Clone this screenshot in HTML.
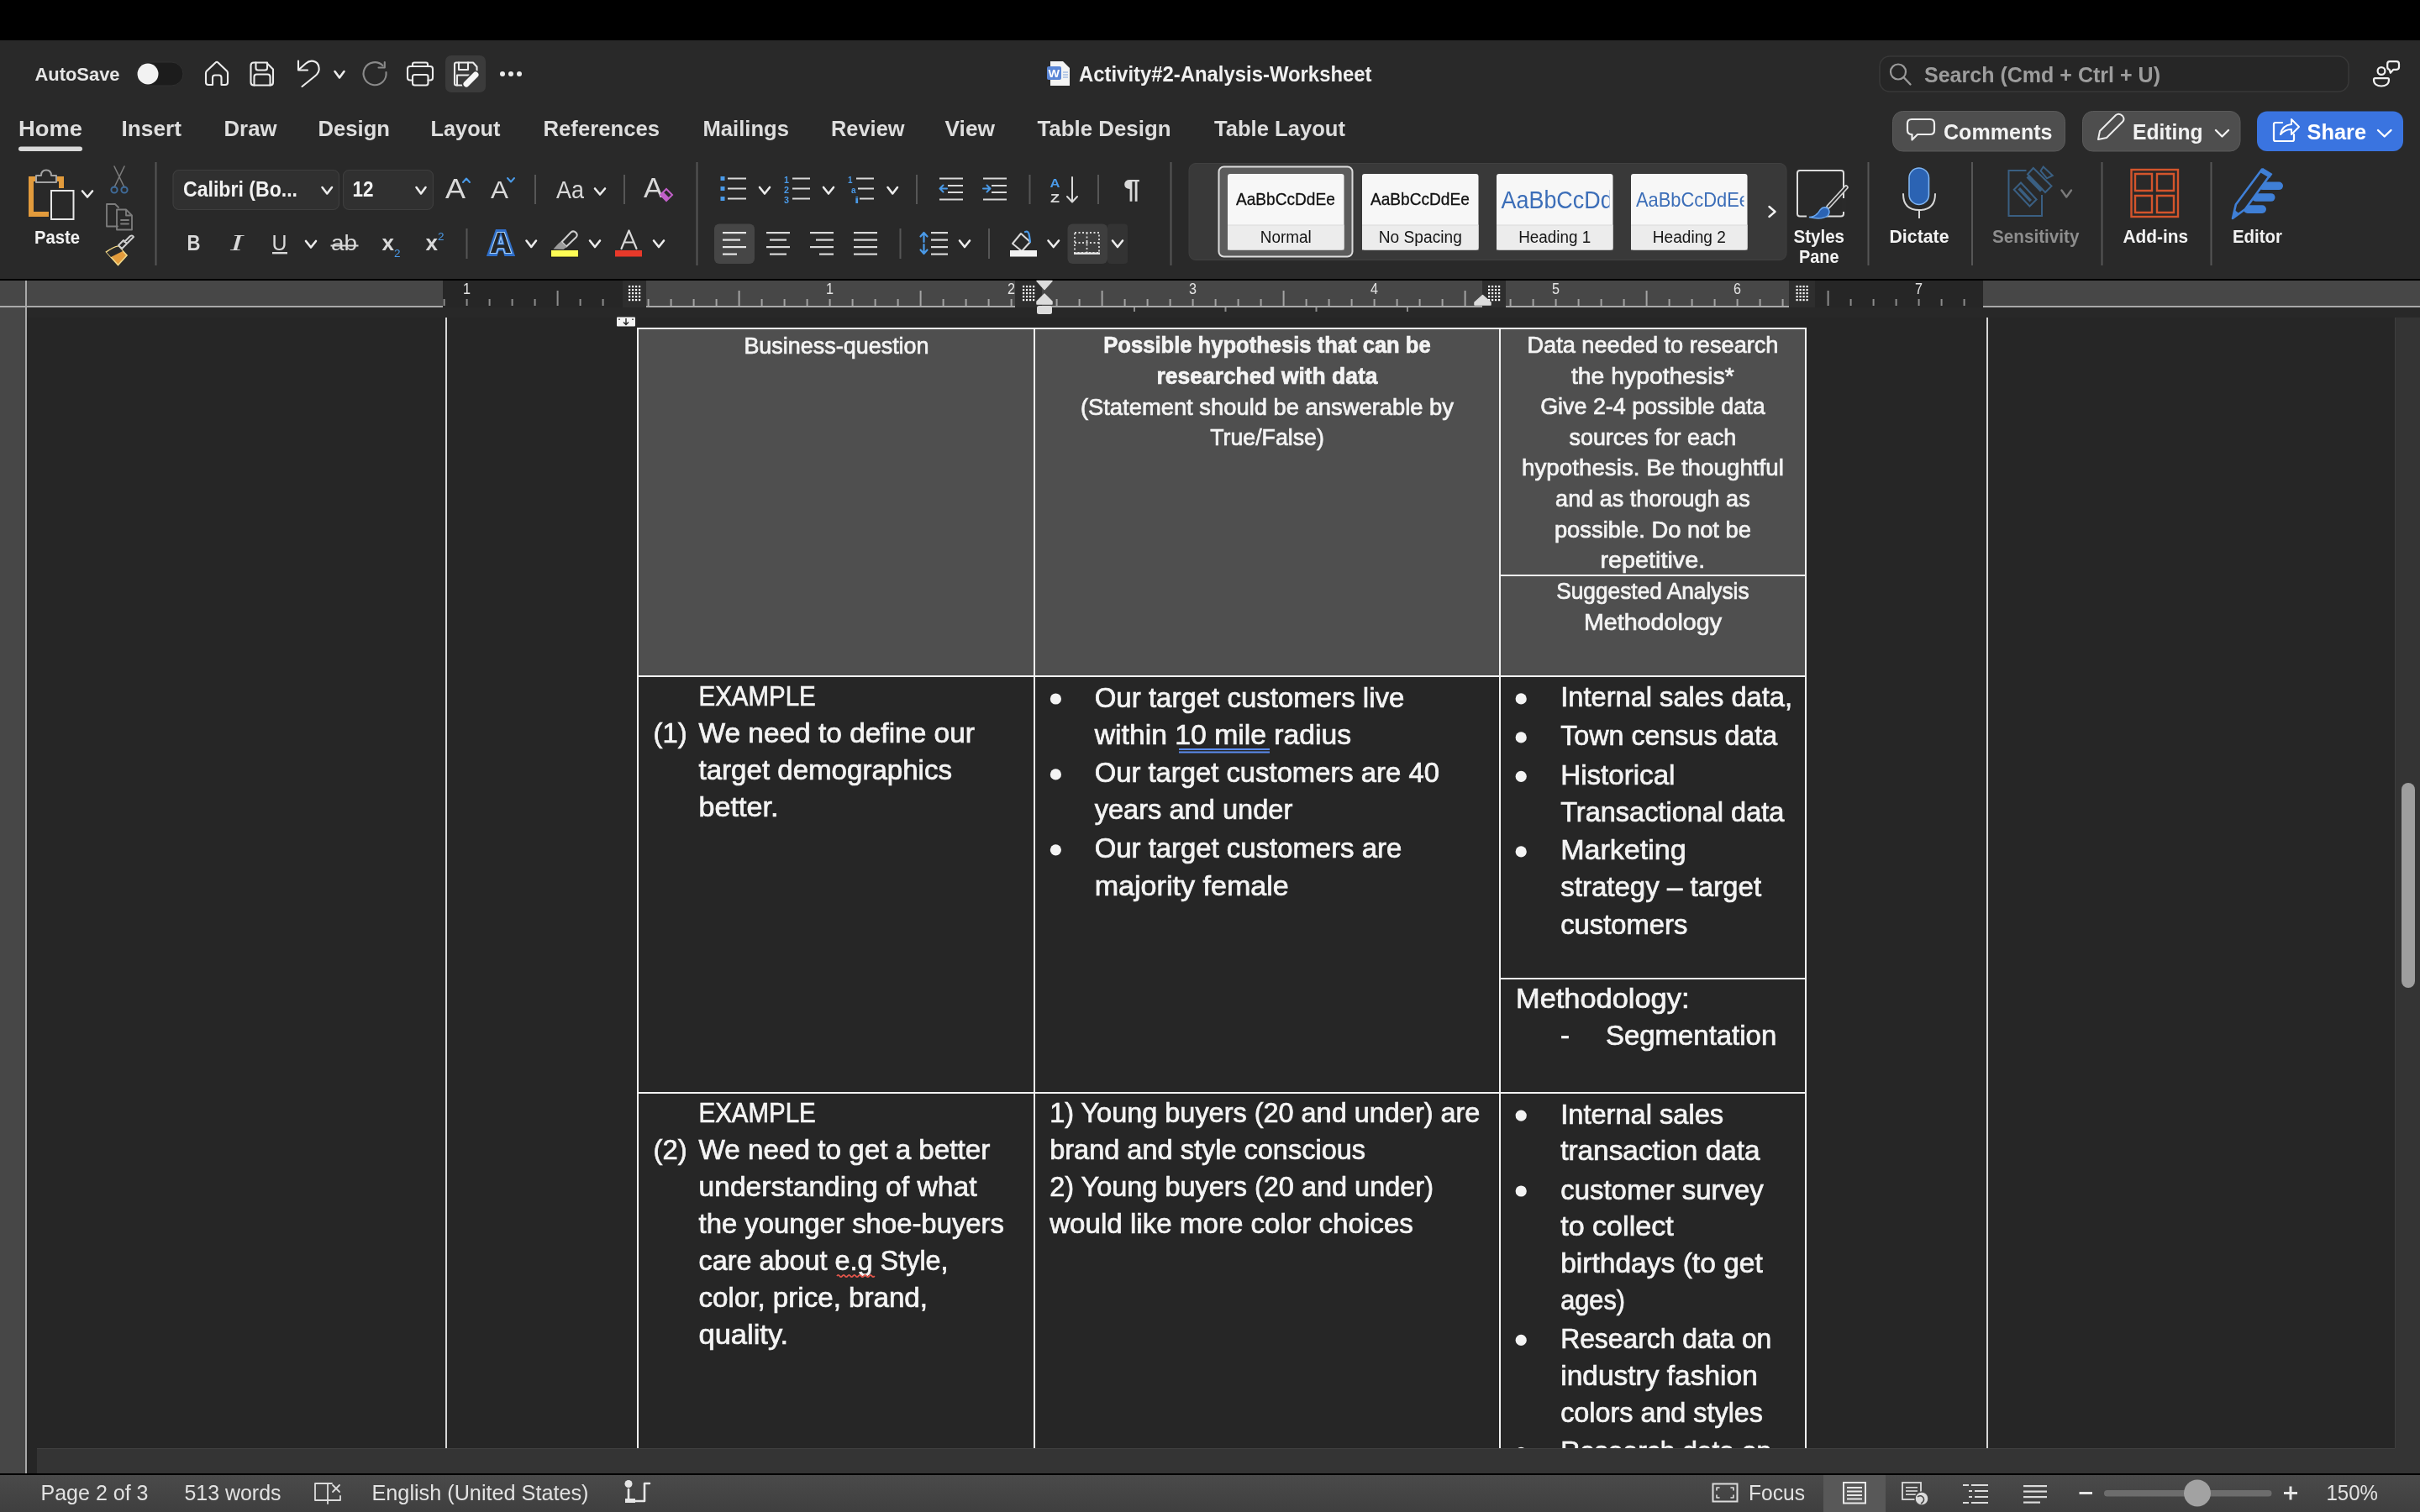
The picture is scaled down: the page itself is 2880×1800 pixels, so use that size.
<!DOCTYPE html>
<html><head><meta charset="utf-8"><title>Activity#2-Analysis-Worksheet</title>
<style>
html,body{margin:0;padding:0;background:#262626;width:2880px;height:1800px;overflow:hidden}
svg{display:block;font-family:"Liberation Sans",sans-serif;will-change:transform}
</style></head><body>
<svg width="2880" height="1800" viewBox="0 0 2880 1800">
<defs>
<linearGradient id="sb" x1="0" y1="0" x2="0" y2="1"><stop offset="0" stop-color="#4a4a4a"/><stop offset="1" stop-color="#3f3f3f"/></linearGradient>
</defs>
<rect x="0" y="0" width="2880" height="1800" fill="#262626"/>
<rect x="0" y="366" width="2880" height="12" fill="#282828"/>
<rect x="0" y="0" width="2880" height="48" fill="#000"/>
<rect x="0" y="48" width="2880" height="284" fill="#292929"/>
<rect x="0" y="332" width="2880" height="2" fill="#000"/>
<text x="41.5" y="96.0" font-size="22.5" fill="#e6e6e6" font-weight="bold" text-anchor="start" textLength="101.0" lengthAdjust="spacingAndGlyphs">AutoSave</text>
<rect x="162" y="74" width="56" height="28" rx="14" fill="#1c1c1c" stroke="#303030" stroke-width="1"/>
<circle cx="176" cy="88" r="12.5" fill="#f2f2f2"/>
<path d="M245,88 L245,98 Q245,101 248,101 L253,101 L253,92.5 Q253,89.5 256,89.5 L260.5,89.5 Q263.5,89.5 263.5,92.5 L263.5,101 L268,101 Q271,101 271,98 L271,87 Q271,85.5 270,84.5 L259.5,74.5 Q258,73 256.5,74.5 L246,84.5 Q245,85.5 245,87 Z" stroke="#ececec" stroke-width="2.1" fill="none" stroke-linecap="round" stroke-linejoin="round"/>
<path d="M302,74.5 L317,74.5 L325,82.5 L325,98 Q325,101.5 321.5,101.5 L302,101.5 Q298.5,101.5 298.5,98 L298.5,78 Q298.5,74.5 302,74.5 Z" stroke="#ececec" stroke-width="2.1" fill="none" stroke-linecap="round" stroke-linejoin="round"/>
<path d="M304.5,74.5 L304.5,81 Q304.5,83.5 307,83.5 L315.5,83.5 Q318,83.5 318,81 L318,74.5" stroke="#ececec" stroke-width="2.1" fill="none" stroke-linecap="round" stroke-linejoin="round"/>
<path d="M302.5,101.5 L302.5,91.5 Q302.5,88.5 305.5,88.5 L318.5,88.5 Q321.5,88.5 321.5,91.5 L321.5,101.5" stroke="#ececec" stroke-width="2.1" fill="none" stroke-linecap="round" stroke-linejoin="round"/>
<path d="M355,72.5 L355,83.5 L366,83.5" stroke="#ececec" stroke-width="2.1" fill="none" stroke-linecap="round" stroke-linejoin="round"/>
<path d="M355.5,83 L364,75.5 C369,71 378,71.5 379.5,80 C380.5,85 378,88 375,90.5 L359.5,103" stroke="#ececec" stroke-width="2.1" fill="none" stroke-linecap="round" stroke-linejoin="round"/>
<path d="M398.5,85 L404.0,92.5 L409.5,85" stroke="#ececec" stroke-width="2.6" fill="none" stroke-linecap="round" stroke-linejoin="round"/>
<path d="M459.5,86 A13.5,13.5 0 1 1 455.5,78" stroke="#8a8a8a" stroke-width="2.1" fill="none" stroke-linecap="round" stroke-linejoin="round"/>
<path d="M450.5,80.5 L457.8,80.5 L457.8,74" stroke="#8a8a8a" stroke-width="2.1" fill="none" stroke-linecap="round" stroke-linejoin="round"/>
<path d="M491,78 L491,76.5 Q491,74.5 493,74.5 L507,74.5 Q509,74.5 509,76.5 L509,78" stroke="#ececec" stroke-width="2.1" fill="none" stroke-linecap="round" stroke-linejoin="round"/>
<path d="M490.5,95.5 L488,95.5 Q485,95.5 485,92.5 L485,82 Q485,79 488,79 L512,79 Q515,79 515,82 L515,92.5 Q515,95.5 512,95.5 L509.5,95.5" stroke="#ececec" stroke-width="2.1" fill="none" stroke-linecap="round" stroke-linejoin="round"/>
<rect x="491" y="89" width="18.5" height="12.5" rx="2.5" fill="none" stroke="#ececec" stroke-width="2.1"/>
<rect x="530" y="66" width="48" height="44" rx="7" fill="#3b3b3b"/>
<path d="M550.5,101.5 L543,101.5 Q541,101.5 541,99.5 L541,76.5 Q541,74.5 543,74.5 L563,74.5 L567.5,79.5 L567.5,84" stroke="#ececec" stroke-width="2.1" fill="none" stroke-linecap="round" stroke-linejoin="round"/>
<path d="M546,74.5 L546,83 L557,83 L557,74.5" stroke="#ececec" stroke-width="2.1" fill="none" stroke-linecap="round" stroke-linejoin="round"/>
<path d="M544,101.5 L544,89.5 L558,89.5" stroke="#ececec" stroke-width="2.1" fill="none" stroke-linecap="round" stroke-linejoin="round"/>
<path d="M555,100 L566,89" stroke="#3b3b3b" stroke-width="10.5" fill="none" stroke-linecap="round" stroke-linejoin="round"/>
<path d="M555,100 L566,89" stroke="#f8f8f8" stroke-width="7" fill="none" stroke-linecap="round" stroke-linejoin="round"/>
<circle cx="598" cy="88" r="3" fill="#ececec"/>
<circle cx="608" cy="88" r="3" fill="#ececec"/>
<circle cx="618" cy="88" r="3" fill="#ececec"/>
<path d="M1250,73 L1265,73 L1273,81 L1273,102 L1250,102 Z" fill="#f4f4f4"/>
<rect x="1246" y="79" width="17" height="16" rx="2" fill="#5a86d6"/>
<text x="1247.5" y="92.0" font-size="12" fill="#fff" font-weight="bold" text-anchor="start" textLength="13.5" lengthAdjust="spacingAndGlyphs">W</text>
<path d="M1265,86 h6 M1265,89 h6 M1265,92 h6" stroke="#7f9fd8" stroke-width="1.2"/>
<text x="1284.0" y="97.3" font-size="26" fill="#f0f0f0" font-weight="bold" text-anchor="start" textLength="348.5" lengthAdjust="spacingAndGlyphs">Activity#2-Analysis-Worksheet</text>
<rect x="2237" y="67" width="558" height="42" rx="12" fill="#262626" stroke="#383838" stroke-width="1.5"/>
<circle cx="2259" cy="85.5" r="9" fill="none" stroke="#9a9a9a" stroke-width="2.2"/>
<path d="M2265.5,92 L2273.5,100.5" stroke="#9a9a9a" stroke-width="2.4" fill="none" stroke-linecap="round" stroke-linejoin="round"/>
<text x="2290.0" y="98.2" font-size="25.5" fill="#9d9d9d" font-weight="bold" text-anchor="start" textLength="281.0" lengthAdjust="spacingAndGlyphs">Search (Cmd + Ctrl + U)</text>
<circle cx="2834" cy="84.5" r="4.4" fill="none" stroke="#f2f2f2" stroke-width="2.2"/>
<path d="M2826.5,93.2 L2841.5,93.2 Q2843,93.2 2843,95 C2843,100 2839,102.5 2834,102.5 C2829,102.5 2825,100 2825,95 Q2825,93.2 2826.5,93.2 Z" stroke="#f2f2f2" stroke-width="2.2" fill="none" stroke-linecap="round" stroke-linejoin="round"/>
<path d="M2844,73.2 L2852,73.2 Q2855,73.2 2855,76.2 L2855,79.8 Q2855,82.8 2852,82.8 L2848.4,82.8 L2844.8,86.8 L2843.6,82.8 Q2841.2,82.5 2841.2,79.8 L2841.2,76.2 Q2841.2,73.2 2844,73.2 Z" stroke="#f2f2f2" stroke-width="2.2" fill="none" stroke-linecap="round" stroke-linejoin="round"/>
<text x="22.0" y="162.2" font-size="26.5" fill="#dedede" font-weight="bold" text-anchor="start" textLength="76.0" lengthAdjust="spacingAndGlyphs">Home</text>
<text x="144.5" y="162.2" font-size="26.5" fill="#dedede" font-weight="bold" text-anchor="start" textLength="71.5" lengthAdjust="spacingAndGlyphs">Insert</text>
<text x="266.5" y="162.2" font-size="26.5" fill="#dedede" font-weight="bold" text-anchor="start" textLength="63.0" lengthAdjust="spacingAndGlyphs">Draw</text>
<text x="378.5" y="162.2" font-size="26.5" fill="#dedede" font-weight="bold" text-anchor="start" textLength="85.5" lengthAdjust="spacingAndGlyphs">Design</text>
<text x="512.5" y="162.2" font-size="26.5" fill="#dedede" font-weight="bold" text-anchor="start" textLength="83.0" lengthAdjust="spacingAndGlyphs">Layout</text>
<text x="646.5" y="162.2" font-size="26.5" fill="#dedede" font-weight="bold" text-anchor="start" textLength="138.5" lengthAdjust="spacingAndGlyphs">References</text>
<text x="836.5" y="162.2" font-size="26.5" fill="#dedede" font-weight="bold" text-anchor="start" textLength="102.5" lengthAdjust="spacingAndGlyphs">Mailings</text>
<text x="989.0" y="162.2" font-size="26.5" fill="#dedede" font-weight="bold" text-anchor="start" textLength="87.5" lengthAdjust="spacingAndGlyphs">Review</text>
<text x="1124.5" y="162.2" font-size="26.5" fill="#dedede" font-weight="bold" text-anchor="start" textLength="59.5" lengthAdjust="spacingAndGlyphs">View</text>
<text x="1234.5" y="162.2" font-size="26.5" fill="#dedede" font-weight="bold" text-anchor="start" textLength="159.0" lengthAdjust="spacingAndGlyphs">Table Design</text>
<text x="1445.0" y="162.2" font-size="26.5" fill="#dedede" font-weight="bold" text-anchor="start" textLength="156.0" lengthAdjust="spacingAndGlyphs">Table Layout</text>
<rect x="22" y="174.5" width="76" height="5.5" rx="2.75" fill="#d9d9d9"/>
<rect x="2252.5" y="132.5" width="205" height="47.5" rx="12" fill="#4e4e4e" stroke="#5a5a5a" stroke-width="1"/>
<path d="M2275,142 L2297,142 Q2302,142 2302,147 L2302,155 Q2302,160 2297,160 L2282,160 L2275.5,166.5 L2275.5,160 Q2270,160 2270,155 L2270,147 Q2270,142 2275,142 Z" stroke="#ececec" stroke-width="2.2" fill="none" stroke-linecap="round" stroke-linejoin="round"/>
<text x="2313.0" y="165.7" font-size="26" fill="#f2f2f2" font-weight="bold" text-anchor="start" textLength="129.5" lengthAdjust="spacingAndGlyphs">Comments</text>
<rect x="2478.5" y="132.5" width="187.5" height="47.5" rx="12" fill="#4e4e4e" stroke="#5a5a5a" stroke-width="1"/>
<path d="M2497,166 L2499,156 L2518,137 Q2522,134 2526,138 Q2529,142 2526,145 L2507,164 Z" stroke="#ececec" stroke-width="2" fill="none" stroke-linecap="round" stroke-linejoin="round"/>
<text x="2538.0" y="165.7" font-size="26" fill="#f2f2f2" font-weight="bold" text-anchor="start" textLength="83.5" lengthAdjust="spacingAndGlyphs">Editing</text>
<path d="M2637,155 L2644.5,162.5 L2652,155" stroke="#f2f2f2" stroke-width="2.4" fill="none" stroke-linecap="round" stroke-linejoin="round"/>
<rect x="2686" y="132.5" width="174" height="47.5" rx="12" fill="#3a74e0"/>
<path d="M2716,146 L2708,146 Q2706,146 2706,148 L2706,166 Q2706,168 2708,168 L2728,168 Q2730,168 2730,166 L2730,160" stroke="#fff" stroke-width="2.2" fill="none" stroke-linecap="round" stroke-linejoin="round"/>
<path d="M2714,160 Q2716,149 2727,148 L2727,142 L2736,151 L2727,160 L2727,154 Q2719,154 2714,160 Z" stroke="#fff" stroke-width="2" fill="none" stroke-linecap="round" stroke-linejoin="round"/>
<text x="2745.5" y="165.7" font-size="26" fill="#fff" font-weight="bold" text-anchor="start" textLength="70.5" lengthAdjust="spacingAndGlyphs">Share</text>
<path d="M2830,155 L2837.75,162.5 L2845.5,155" stroke="#fff" stroke-width="2.4" fill="none" stroke-linecap="round" stroke-linejoin="round"/>
<rect x="184.5" y="193" width="2" height="123" fill="#565656"/>
<rect x="828.5" y="193" width="2" height="123" fill="#565656"/>
<rect x="1392.5" y="193" width="2" height="123" fill="#565656"/>
<rect x="2222.5" y="193" width="2" height="123" fill="#565656"/>
<rect x="2346" y="193" width="2" height="123" fill="#565656"/>
<rect x="2500.5" y="193" width="2" height="123" fill="#565656"/>
<rect x="2630.5" y="193" width="2" height="123" fill="#565656"/>
<rect x="636" y="208" width="2" height="35" fill="#565656"/>
<rect x="742" y="208" width="2" height="35" fill="#565656"/>
<rect x="1090" y="208" width="2" height="35" fill="#565656"/>
<rect x="1224.5" y="208" width="2" height="35" fill="#565656"/>
<rect x="1306" y="208" width="2" height="35" fill="#565656"/>
<rect x="554.5" y="272" width="2" height="36" fill="#565656"/>
<rect x="1070.5" y="272" width="2" height="36" fill="#565656"/>
<rect x="1176" y="272" width="2" height="36" fill="#565656"/>
<path d="M34,210 L76,210 L76,224 L70,224 L70,216 L40,216 L40,252 L58,252 L58,258 L34,258 Z" fill="#e29b3c"/>
<path d="M43,217 L43,209 L49,209 Q49,202.5 55,202.5 Q61,202.5 61,209 L67,209 L67,217 Z" stroke="#a3a3a3" stroke-width="2" fill="#2a2a2a" stroke-linecap="round" stroke-linejoin="round"/>
<rect x="61" y="227" width="26.5" height="34" fill="none" stroke="#e6e6e6" stroke-width="2"/>
<path d="M98,227.5 L104.0,234.5 L110,227.5" stroke="#ececec" stroke-width="2.6" fill="none" stroke-linecap="round" stroke-linejoin="round"/>
<text x="41.0" y="289.7" font-size="21.5" fill="#f2f2f2" font-weight="bold" text-anchor="start" textLength="54.0" lengthAdjust="spacingAndGlyphs">Paste</text>
<path d="M136,198 L148,223 M148,198 L136,223" stroke="#7b7b7b" stroke-width="1.6" fill="none" stroke-linecap="round" stroke-linejoin="round"/>
<circle cx="136" cy="226" r="3.6" fill="none" stroke="#3f6b99" stroke-width="2"/><circle cx="148" cy="226" r="3.6" fill="none" stroke="#3f6b99" stroke-width="2"/>
<path d="M140,269.5 L127,269.5 L127,243 L137,243 L141,247" stroke="#7d7d7d" stroke-width="1.8" fill="none" stroke-linecap="round" stroke-linejoin="round" stroke-linecap="butt" stroke-linejoin="miter"/>
<path d="M139,249.5 L150,249.5 L157,256.5 L157,273.5 L139,273.5 Z M150,249.5 L150,256.5 L157,256.5 M144,262 L153,262 M144,266.5 L153,266.5" stroke="#7d7d7d" stroke-width="1.8" fill="none" stroke-linecap="round" stroke-linejoin="round" stroke-linecap="butt" stroke-linejoin="miter"/>
<path d="M126.5,300 Q135,294 141,293 L151,304 L140.5,315.5 Z" fill="#e29b3c" stroke="#f1d888" stroke-width="1.6"/>
<path d="M127,300.5 Q135,294.5 141,293.5 L146,299 L132,306 Z" fill="#2a2a2a"/>
<path d="M141,292 L147,286 L151,290 L145,296 Z M148,288 L155,281 Q157.5,279.5 159,282 L152,289" stroke="#cfcfcf" stroke-width="2" fill="none" stroke-linecap="round" stroke-linejoin="round"/>
<rect x="206" y="202.5" width="197.5" height="47" rx="7" fill="#303030" stroke="#3e3e3e" stroke-width="1.2"/>
<text x="218.0" y="234.0" font-size="25" fill="#f2f2f2" font-weight="bold" text-anchor="start" textLength="136.0" lengthAdjust="spacingAndGlyphs">Calibri (Bo...</text>
<path d="M383.5,223 L389.25,230.5 L395,223" stroke="#ececec" stroke-width="2.6" fill="none" stroke-linecap="round" stroke-linejoin="round"/>
<rect x="408.5" y="202.5" width="107" height="47" rx="7" fill="#303030" stroke="#3e3e3e" stroke-width="1.2"/>
<text x="419.5" y="234.0" font-size="25" fill="#f2f2f2" font-weight="bold" text-anchor="start" textLength="25.0" lengthAdjust="spacingAndGlyphs">12</text>
<path d="M495.5,223 L501.0,230.5 L506.5,223" stroke="#ececec" stroke-width="2.6" fill="none" stroke-linecap="round" stroke-linejoin="round"/>
<text x="530.0" y="235.5" font-size="34" fill="#d9d9d9" font-weight="normal" text-anchor="start" textLength="24.0" lengthAdjust="spacingAndGlyphs">A</text>
<path d="M551,217 L555,212.5 L559,217" stroke="#4a9ae8" stroke-width="2" fill="none" stroke-linecap="round" stroke-linejoin="round"/>
<text x="584.0" y="235.5" font-size="30" fill="#d9d9d9" font-weight="normal" text-anchor="start" textLength="21.0" lengthAdjust="spacingAndGlyphs">A</text>
<path d="M604,212 L608,216.5 L612,212" stroke="#4a9ae8" stroke-width="2" fill="none" stroke-linecap="round" stroke-linejoin="round"/>
<text x="662.0" y="235.5" font-size="29" fill="#d9d9d9" font-weight="normal" text-anchor="start" textLength="33.0" lengthAdjust="spacingAndGlyphs">Aa</text>
<path d="M708,224.5 L714.0,231.5 L720,224.5" stroke="#ececec" stroke-width="2.6" fill="none" stroke-linecap="round" stroke-linejoin="round"/>
<text x="766.0" y="235.0" font-size="34" fill="#d9d9d9" font-weight="normal" text-anchor="start" textLength="23.0" lengthAdjust="spacingAndGlyphs">A</text>
<path d="M786,232 L793,225 L800,232 L793,239 Z" fill="none" stroke="#c060c8" stroke-width="2"/>
<path d="M786,232 L789.5,228.5 L796.5,235.5 L793,239 Z" fill="#c060c8"/>
<text x="222.5" y="298.0" font-size="26.5" fill="#d9d9d9" font-weight="bold" text-anchor="start" textLength="16.0" lengthAdjust="spacingAndGlyphs">B</text>
<text x="274" y="298" font-size="27" fill="#d9d9d9" font-family="Liberation Serif" font-style="italic" textLength="15" lengthAdjust="spacingAndGlyphs">I</text>
<text x="323.5" y="298.0" font-size="26" fill="#d9d9d9" font-weight="normal" text-anchor="start" textLength="18.0" lengthAdjust="spacingAndGlyphs">U</text>
<rect x="324" y="300" width="18" height="2.4" fill="#d9d9d9"/>
<path d="M364,287 L370.0,294.5 L376,287" stroke="#ececec" stroke-width="2.6" fill="none" stroke-linecap="round" stroke-linejoin="round"/>
<text x="394.0" y="298.0" font-size="25" fill="#d9d9d9" font-weight="normal" text-anchor="start" textLength="31.0" lengthAdjust="spacingAndGlyphs">ab</text>
<rect x="393.5" y="291.5" width="33" height="2" fill="#d9d9d9"/>
<text x="454.5" y="298.0" font-size="26" fill="#d9d9d9" font-weight="bold" text-anchor="start" textLength="14.5" lengthAdjust="spacingAndGlyphs">x</text>
<text x="469.0" y="305.5" font-size="13" fill="#4a9ae8" font-weight="normal" text-anchor="start" textLength="7.5" lengthAdjust="spacingAndGlyphs">2</text>
<text x="506.5" y="298.0" font-size="26" fill="#d9d9d9" font-weight="bold" text-anchor="start" textLength="14.5" lengthAdjust="spacingAndGlyphs">x</text>
<text x="521.0" y="286.0" font-size="13" fill="#4a9ae8" font-weight="normal" text-anchor="start" textLength="7.5" lengthAdjust="spacingAndGlyphs">2</text>
<path d="M591,274.5 L601,274.5 L611,303.5 L601.5,303.5 L599.5,297 L592.5,297 L590.5,303.5 L581,303.5 Z M593.5,290 L598.5,290 L596,281 Z" fill="#252525" fill-rule="evenodd" stroke="#2f6ec8" stroke-width="3" stroke-linejoin="miter"/>
<path d="M591,274.5 L601,274.5 L611,303.5 L601.5,303.5 L599.5,297 L592.5,297 L590.5,303.5 L581,303.5 Z M593.5,290 L598.5,290 L596,281 Z" fill="none" stroke="#a6d0f7" stroke-width="1.3" transform="translate(596,289) scale(0.86) translate(-596,-289)"/>
<path d="M626.5,286.5 L632.25,294 L638,286.5" stroke="#ececec" stroke-width="2.6" fill="none" stroke-linecap="round" stroke-linejoin="round"/>
<path d="M668.5,288 L679.5,276.5 Q682.5,274 685.5,277 Q688,280 685.5,282.5 L674,293.5 Z" stroke="#cfcfcf" stroke-width="2" fill="none" stroke-linecap="round" stroke-linejoin="round"/>
<path d="M667.5,287.5 L674.5,294 L670.5,297 L658.5,296.5 L664.5,290 Z" fill="#9a9a9a"/>
<rect x="655.5" y="297.5" width="33" height="8.5" fill="#fdfc55" stroke="#111" stroke-width="0.8"/>
<path d="M702,286.5 L708.0,294 L714,286.5" stroke="#ececec" stroke-width="2.6" fill="none" stroke-linecap="round" stroke-linejoin="round"/>
<path d="M739.5,296 L748.5,274.5 L757.5,296 M742.5,288.5 L754.5,288.5" stroke="#d9d9d9" stroke-width="2.2" fill="none" stroke-linecap="round" stroke-linejoin="round" stroke-linecap="butt" stroke-linejoin="miter"/>
<rect x="732" y="298" width="32" height="7.5" fill="#e8392a"/>
<path d="M778,286.5 L784.0,294 L790,286.5" stroke="#ececec" stroke-width="2.6" fill="none" stroke-linecap="round" stroke-linejoin="round"/>
<rect x="857.5" y="210" width="5" height="5" fill="#4a9ae8"/>
<rect x="866" y="211.5" width="22" height="2" fill="#d9d9d9"/>
<rect x="857.5" y="222" width="5" height="5" fill="#4a9ae8"/>
<rect x="866" y="223.5" width="22" height="2" fill="#d9d9d9"/>
<rect x="857.5" y="234" width="5" height="5" fill="#4a9ae8"/>
<rect x="866" y="235.5" width="22" height="2" fill="#d9d9d9"/>
<path d="M904,223 L910.0,230.5 L916,223" stroke="#ececec" stroke-width="2.6" fill="none" stroke-linecap="round" stroke-linejoin="round"/>
<text x="933.0" y="217.5" font-size="10.5" fill="#4a9ae8" font-weight="bold" text-anchor="start" textLength="6.0" lengthAdjust="spacingAndGlyphs">1</text>
<rect x="943" y="211.5" width="21" height="2" fill="#d9d9d9"/>
<text x="933.0" y="229.5" font-size="10.5" fill="#4a9ae8" font-weight="bold" text-anchor="start" textLength="6.0" lengthAdjust="spacingAndGlyphs">2</text>
<rect x="943" y="223.5" width="21" height="2" fill="#d9d9d9"/>
<text x="933.0" y="241.5" font-size="10.5" fill="#4a9ae8" font-weight="bold" text-anchor="start" textLength="6.0" lengthAdjust="spacingAndGlyphs">3</text>
<rect x="943" y="235.5" width="21" height="2" fill="#d9d9d9"/>
<path d="M980,223 L986.0,230.5 L992,223" stroke="#ececec" stroke-width="2.6" fill="none" stroke-linecap="round" stroke-linejoin="round"/>
<text x="1009.0" y="217.5" font-size="10.5" fill="#4a9ae8" font-weight="bold" text-anchor="start" textLength="5.5" lengthAdjust="spacingAndGlyphs">1</text>
<rect x="1019" y="211.5" width="21" height="2" fill="#d9d9d9"/>
<text x="1013.0" y="229.5" font-size="10.5" fill="#4a9ae8" font-weight="bold" text-anchor="start" textLength="5.5" lengthAdjust="spacingAndGlyphs">a</text>
<rect x="1021" y="223.5" width="19" height="2" fill="#d9d9d9"/>
<text x="1017.0" y="241.5" font-size="10.5" fill="#4a9ae8" font-weight="bold" text-anchor="start" textLength="5.5" lengthAdjust="spacingAndGlyphs">i</text>
<rect x="1023" y="235.5" width="17" height="2" fill="#d9d9d9"/>
<path d="M1056.5,223 L1062.25,230.5 L1068,223" stroke="#ececec" stroke-width="2.6" fill="none" stroke-linecap="round" stroke-linejoin="round"/>
<rect x="1118" y="211.5" width="28" height="2" fill="#d9d9d9"/>
<rect x="1128" y="220" width="18" height="2" fill="#d9d9d9"/>
<rect x="1128" y="228" width="18" height="2" fill="#d9d9d9"/>
<rect x="1118" y="236.5" width="28" height="2" fill="#d9d9d9"/>
<rect x="1170" y="211.5" width="28" height="2" fill="#d9d9d9"/>
<rect x="1180" y="220" width="18" height="2" fill="#d9d9d9"/>
<rect x="1180" y="228" width="18" height="2" fill="#d9d9d9"/>
<rect x="1170" y="236.5" width="28" height="2" fill="#d9d9d9"/>
<path d="M1127,224.5 L1119,224.5 M1122.5,220.5 L1118.5,224.5 L1122.5,228.5" stroke="#4a9ae8" stroke-width="2" fill="none" stroke-linecap="round" stroke-linejoin="round"/>
<path d="M1170,224.5 L1178,224.5 M1174.5,220.5 L1178.5,224.5 L1174.5,228.5" stroke="#4a9ae8" stroke-width="2" fill="none" stroke-linecap="round" stroke-linejoin="round"/>
<text x="1249.5" y="222.5" font-size="14" fill="#4a9ae8" font-weight="bold" text-anchor="start" textLength="12.0" lengthAdjust="spacingAndGlyphs">A</text>
<text x="1250.0" y="240.5" font-size="14" fill="#d9d9d9" font-weight="bold" text-anchor="start" textLength="11.0" lengthAdjust="spacingAndGlyphs">Z</text>
<path d="M1276,211 L1276,240 M1270,234 L1276,240.5 L1282,234" stroke="#d9d9d9" stroke-width="2" fill="none" stroke-linecap="round" stroke-linejoin="round"/>
<text x="1337.0" y="236.0" font-size="31" fill="#d9d9d9" font-weight="bold" text-anchor="start" textLength="20.0" lengthAdjust="spacingAndGlyphs">¶</text>
<rect x="850" y="266.5" width="48" height="47.5" rx="6" fill="#464646"/>
<rect x="860" y="276.0" width="28" height="2.2" fill="#e6e6e6"/>
<rect x="860" y="284.5" width="21" height="2.2" fill="#e6e6e6"/>
<rect x="860" y="293.0" width="28" height="2.2" fill="#e6e6e6"/>
<rect x="860" y="301.5" width="17" height="2.2" fill="#e6e6e6"/>
<rect x="912" y="276.0" width="28" height="2.2" fill="#d9d9d9"/>
<rect x="916" y="284.5" width="20" height="2.2" fill="#d9d9d9"/>
<rect x="912" y="293.0" width="28" height="2.2" fill="#d9d9d9"/>
<rect x="916" y="301.5" width="20" height="2.2" fill="#d9d9d9"/>
<rect x="964" y="276.0" width="28" height="2.2" fill="#d9d9d9"/>
<rect x="971" y="284.5" width="21" height="2.2" fill="#d9d9d9"/>
<rect x="964" y="293.0" width="28" height="2.2" fill="#d9d9d9"/>
<rect x="975" y="301.5" width="17" height="2.2" fill="#d9d9d9"/>
<rect x="1016" y="276.0" width="28" height="2.2" fill="#d9d9d9"/>
<rect x="1016" y="284.5" width="28" height="2.2" fill="#d9d9d9"/>
<rect x="1016" y="293.0" width="28" height="2.2" fill="#d9d9d9"/>
<rect x="1016" y="301.5" width="28" height="2.2" fill="#d9d9d9"/>
<rect x="1108" y="276.0" width="20" height="2.2" fill="#d9d9d9"/>
<rect x="1108" y="284.5" width="20" height="2.2" fill="#d9d9d9"/>
<rect x="1108" y="293.0" width="20" height="2.2" fill="#d9d9d9"/>
<rect x="1108" y="301.5" width="20" height="2.2" fill="#d9d9d9"/>
<path d="M1099.5,277.5 L1099.5,288 M1095.5,281.5 L1099.5,277 L1103.5,281.5 M1099.5,291 L1099.5,301.5 M1095.5,297.5 L1099.5,302 L1103.5,297.5" stroke="#4a9ae8" stroke-width="2.2" fill="none" stroke-linecap="round" stroke-linejoin="round"/>
<path d="M1142,286.5 L1148.0,294 L1154,286.5" stroke="#ececec" stroke-width="2.6" fill="none" stroke-linecap="round" stroke-linejoin="round"/>
<path d="M1205,290 L1215,278 L1226,288 L1216,299 Z" stroke="#d9d9d9" stroke-width="2" fill="none" stroke-linecap="round" stroke-linejoin="round"/>
<path d="M1220,276 Q1224,274 1225,281 L1226,288" stroke="#4a9ae8" stroke-width="2.2" fill="none" stroke-linecap="round" stroke-linejoin="round"/>
<rect x="1202" y="298" width="32" height="7.5" fill="#f2f2f2"/>
<path d="M1247.5,286.5 L1253.75,294 L1260,286.5" stroke="#ececec" stroke-width="2.6" fill="none" stroke-linecap="round" stroke-linejoin="round"/>
<rect x="1270.5" y="266.5" width="47.5" height="47.5" rx="6" fill="#3e3e3e"/>
<rect x="1318" y="266.5" width="24" height="47.5" rx="4" fill="#333"/>
<path d="M1279,277 h29 v24 h-29 z M1293.5,277 v24 M1279,289 h29" stroke="#d9d9d9" stroke-width="1.8" stroke-dasharray="2,2.5" fill="none"/>
<rect x="1278" y="300.5" width="31" height="2.4" fill="#e6e6e6"/>
<path d="M1324,286.5 L1330.0,294 L1336,286.5" stroke="#ececec" stroke-width="2.6" fill="none" stroke-linecap="round" stroke-linejoin="round"/>
<rect x="1415" y="194.5" width="711" height="115" rx="8" fill="#393939" stroke="#414141" stroke-width="1"/>
<rect x="1450.5" y="198.5" width="159" height="107" rx="6" fill="#5c5c5c" stroke="#dcdcdc" stroke-width="2"/>
<rect x="1461" y="207" width="138.5" height="90.5" rx="3" fill="#f7f7f7"/>
<rect x="1461" y="268" width="138.5" height="29.5" fill="#ececec"/>
<rect x="1461" y="267.5" width="138.5" height="1" fill="#dadada"/>
<clipPath id="cp1461"><rect x="1461" y="207" width="134.5" height="60"/></clipPath><g clip-path="url(#cp1461)">
<text x="1471.0" y="244.2" font-size="20.4" fill="#111" font-weight="normal" text-anchor="start" textLength="117.8" lengthAdjust="spacingAndGlyphs" stroke="#111" stroke-width="0.3">AaBbCcDdEe</text>
</g>
<text x="1499.8" y="288.5" font-size="20" fill="#141414" font-weight="normal" text-anchor="start" textLength="61.0" lengthAdjust="spacingAndGlyphs">Normal</text>
<rect x="1621" y="207" width="138.5" height="90.5" rx="3" fill="#f7f7f7"/>
<rect x="1621" y="268" width="138.5" height="29.5" fill="#ececec"/>
<rect x="1621" y="267.5" width="138.5" height="1" fill="#dadada"/>
<clipPath id="cp1621"><rect x="1621" y="207" width="134.5" height="60"/></clipPath><g clip-path="url(#cp1621)">
<text x="1631.0" y="244.2" font-size="20.4" fill="#111" font-weight="normal" text-anchor="start" textLength="117.8" lengthAdjust="spacingAndGlyphs" stroke="#111" stroke-width="0.3">AaBbCcDdEe</text>
</g>
<text x="1640.8" y="288.5" font-size="20" fill="#141414" font-weight="normal" text-anchor="start" textLength="99.0" lengthAdjust="spacingAndGlyphs">No Spacing</text>
<rect x="1781" y="207" width="138.5" height="90.5" rx="3" fill="#f7f7f7"/>
<rect x="1781" y="268" width="138.5" height="29.5" fill="#ececec"/>
<rect x="1781" y="267.5" width="138.5" height="1" fill="#dadada"/>
<clipPath id="cp1781"><rect x="1781" y="207" width="134.5" height="60"/></clipPath><g clip-path="url(#cp1781)">
<text x="1786.5" y="247.9" font-size="28.8" fill="#3c6eb8" font-weight="normal" text-anchor="start" textLength="166.1" lengthAdjust="spacingAndGlyphs" stroke="#3c6eb8" stroke-width="0">AaBbCcDdEe</text>
</g>
<text x="1807.2" y="288.5" font-size="20" fill="#141414" font-weight="normal" text-anchor="start" textLength="86.0" lengthAdjust="spacingAndGlyphs">Heading 1</text>
<rect x="1941" y="207" width="138.5" height="90.5" rx="3" fill="#f7f7f7"/>
<rect x="1941" y="268" width="138.5" height="29.5" fill="#ececec"/>
<rect x="1941" y="267.5" width="138.5" height="1" fill="#dadada"/>
<clipPath id="cp1941"><rect x="1941" y="207" width="134.5" height="60"/></clipPath><g clip-path="url(#cp1941)">
<text x="1947.0" y="246.0" font-size="23.4" fill="#3c6eb8" font-weight="normal" text-anchor="start" textLength="135.0" lengthAdjust="spacingAndGlyphs" stroke="#3c6eb8" stroke-width="0">AaBbCcDdEe</text>
</g>
<text x="1966.8" y="288.5" font-size="20" fill="#141414" font-weight="normal" text-anchor="start" textLength="87.0" lengthAdjust="spacingAndGlyphs">Heading 2</text>
<path d="M2105.5,246 L2112.5,252 L2105.5,258" stroke="#f2f2f2" stroke-width="2.4" fill="none" stroke-linecap="round" stroke-linejoin="round"/>
<rect x="2139" y="203" width="55" height="54.5" rx="3" fill="none" stroke="#dcdcdc" stroke-width="2"/>
<rect x="2150" y="250" width="14" height="10" fill="#2a2a2a"/>
<rect x="2192" y="236" width="5" height="16" fill="#2a2a2a"/>
<path d="M2197,223 L2176,246" stroke="#d0d0d0" stroke-width="5.5" fill="none" stroke-linecap="round" stroke-linejoin="round"/>
<path d="M2197,223 L2176,246" stroke="#2a2a2a" stroke-width="2" fill="none" stroke-linecap="round" stroke-linejoin="round"/>
<path d="M2153,258.5 Q2162,258 2166,250 Q2170,245 2175,248 Q2179,252 2175,257 Q2168,262 2153,258.5 Z" fill="#2b63b3" stroke="#69a6ee" stroke-width="1.5"/>
<text x="2134.5" y="289.3" font-size="21.5" fill="#f2f2f2" font-weight="bold" text-anchor="start" textLength="60.5" lengthAdjust="spacingAndGlyphs">Styles</text>
<text x="2141.0" y="313.0" font-size="21.5" fill="#f2f2f2" font-weight="bold" text-anchor="start" textLength="47.5" lengthAdjust="spacingAndGlyphs">Pane</text>
<rect x="2272" y="200" width="23.5" height="43.5" rx="11.75" fill="#2b63b3" stroke="#7fb4f0" stroke-width="1.6"/>
<path d="M2265,231 Q2265,250 2284,250 Q2303,250 2303,231" stroke="#d6d6d6" stroke-width="2" fill="none" stroke-linecap="round" stroke-linejoin="round"/>
<rect x="2283" y="250" width="2" height="10" fill="#d6d6d6"/>
<text x="2248.5" y="289.3" font-size="21.5" fill="#f2f2f2" font-weight="bold" text-anchor="start" textLength="71.0" lengthAdjust="spacingAndGlyphs">Dictate</text>
<path d="M2411.5,203 L2390.5,203 L2390.5,257 L2430,257 L2430,232" fill="none" stroke="#3a5f82" stroke-width="2"/>
<path d="M2396.8,225.7 L2405,217.5 L2423.6,237.5 L2415.5,245.5 Z" fill="#2a2a2a" stroke="#3a5f82" stroke-width="2"/>
<path d="M2401.5,225.5 L2404,223 L2418,238 L2415.5,240.5 Z" fill="#3a5f82"/>
<path d="M2413,207.5 L2419.8,200 L2441.5,221.5 L2434,229 Z" fill="#2a2a2a" stroke="#3a5f82" stroke-width="2"/>
<path d="M2411.5,211.5 L2415,208 L2431.5,225 L2428,228.5 Z" fill="#3a5f82"/>
<path d="M2428.5,203.5 L2431.7,198.5 L2442.8,209 L2436,212.3 Z" fill="#2a2a2a" stroke="#3a5f82" stroke-width="2"/>
<path d="M2453.5,226.5 L2459.25,234.5 L2465,226.5" stroke="#7a7a7a" stroke-width="2.4" fill="none" stroke-linecap="round" stroke-linejoin="round"/>
<text x="2371.0" y="289.3" font-size="21.5" fill="#8e8e8e" font-weight="bold" text-anchor="start" textLength="103.5" lengthAdjust="spacingAndGlyphs">Sensitivity</text>
<rect x="2536.5" y="202" width="55.5" height="56" fill="none" stroke="#d4552c" stroke-width="2.4"/>
<path d="M2541,207 h20 v20 h-20 z M2567,207 h20 v20 h-20 z M2541,233 h20 v20 h-20 z M2567,233 h20 v20 h-20 z" fill="none" stroke="#d4552c" stroke-width="2.4"/>
<text x="2526.5" y="289.3" font-size="21.5" fill="#f2f2f2" font-weight="bold" text-anchor="start" textLength="77.5" lengthAdjust="spacingAndGlyphs">Add-ins</text>
<rect x="2688" y="216.5" width="29" height="9.6" rx="4.8" fill="#3f7fd6"/>
<rect x="2680" y="230.2" width="27.5" height="9.6" rx="4.8" fill="#3f7fd6"/>
<rect x="2670" y="244.3" width="27" height="9.6" rx="4.8" fill="#3f7fd6"/>
<path d="M2657,260 L2660.8,243.6 L2692,201.5 L2702,207.8 L2672,249 Z" fill="#2a2a2a" stroke="#3f7fd6" stroke-width="2.6" stroke-linejoin="round"/>
<path d="M2689.5,205 L2693,200 L2704.5,207 L2701,212 Z" fill="#3f7fd6"/>
<path d="M2657,260 L2659.5,250 L2664.5,254 Z" fill="#3f7fd6"/>
<text x="2657.0" y="289.3" font-size="21.5" fill="#f2f2f2" font-weight="bold" text-anchor="start" textLength="59.0" lengthAdjust="spacingAndGlyphs">Editor</text>
<g id="doc">
<rect x="0" y="334" width="2880" height="30" fill="#474747"/>
<rect x="0" y="364" width="2880" height="2" fill="#a9a9a9"/>
<rect x="0" y="366" width="31" height="1390" fill="#474747"/>
<rect x="30" y="334" width="2" height="1420" fill="#a9a9a9"/>
<rect x="527" y="334" width="214" height="32" fill="#262626"/>
<rect x="2160" y="334" width="200" height="32" fill="#262626"/>
<rect x="741" y="334" width="28" height="32" fill="#2e2e2e"/>
<rect x="748.0" y="340" width="2.2" height="2.2" fill="#fff"/>
<rect x="748.0" y="344" width="2.2" height="2.2" fill="#fff"/>
<rect x="748.0" y="348" width="2.2" height="2.2" fill="#fff"/>
<rect x="748.0" y="352" width="2.2" height="2.2" fill="#fff"/>
<rect x="748.0" y="356" width="2.2" height="2.2" fill="#fff"/>
<rect x="752.0" y="340" width="2.2" height="2.2" fill="#fff"/>
<rect x="752.0" y="344" width="2.2" height="2.2" fill="#fff"/>
<rect x="752.0" y="348" width="2.2" height="2.2" fill="#fff"/>
<rect x="752.0" y="352" width="2.2" height="2.2" fill="#fff"/>
<rect x="752.0" y="356" width="2.2" height="2.2" fill="#fff"/>
<rect x="756.0" y="340" width="2.2" height="2.2" fill="#fff"/>
<rect x="756.0" y="344" width="2.2" height="2.2" fill="#fff"/>
<rect x="756.0" y="348" width="2.2" height="2.2" fill="#fff"/>
<rect x="756.0" y="352" width="2.2" height="2.2" fill="#fff"/>
<rect x="756.0" y="356" width="2.2" height="2.2" fill="#fff"/>
<rect x="760.0" y="340" width="2.2" height="2.2" fill="#fff"/>
<rect x="760.0" y="344" width="2.2" height="2.2" fill="#fff"/>
<rect x="760.0" y="348" width="2.2" height="2.2" fill="#fff"/>
<rect x="760.0" y="352" width="2.2" height="2.2" fill="#fff"/>
<rect x="760.0" y="356" width="2.2" height="2.2" fill="#fff"/>
<rect x="1208" y="334" width="32" height="32" fill="#2e2e2e"/>
<rect x="1217.0" y="340" width="2.2" height="2.2" fill="#fff"/>
<rect x="1217.0" y="344" width="2.2" height="2.2" fill="#fff"/>
<rect x="1217.0" y="348" width="2.2" height="2.2" fill="#fff"/>
<rect x="1217.0" y="352" width="2.2" height="2.2" fill="#fff"/>
<rect x="1217.0" y="356" width="2.2" height="2.2" fill="#fff"/>
<rect x="1221.0" y="340" width="2.2" height="2.2" fill="#fff"/>
<rect x="1221.0" y="344" width="2.2" height="2.2" fill="#fff"/>
<rect x="1221.0" y="348" width="2.2" height="2.2" fill="#fff"/>
<rect x="1221.0" y="352" width="2.2" height="2.2" fill="#fff"/>
<rect x="1221.0" y="356" width="2.2" height="2.2" fill="#fff"/>
<rect x="1225.0" y="340" width="2.2" height="2.2" fill="#fff"/>
<rect x="1225.0" y="344" width="2.2" height="2.2" fill="#fff"/>
<rect x="1225.0" y="348" width="2.2" height="2.2" fill="#fff"/>
<rect x="1225.0" y="352" width="2.2" height="2.2" fill="#fff"/>
<rect x="1225.0" y="356" width="2.2" height="2.2" fill="#fff"/>
<rect x="1229.0" y="340" width="2.2" height="2.2" fill="#fff"/>
<rect x="1229.0" y="344" width="2.2" height="2.2" fill="#fff"/>
<rect x="1229.0" y="348" width="2.2" height="2.2" fill="#fff"/>
<rect x="1229.0" y="352" width="2.2" height="2.2" fill="#fff"/>
<rect x="1229.0" y="356" width="2.2" height="2.2" fill="#fff"/>
<rect x="1764" y="334" width="28" height="32" fill="#2e2e2e"/>
<rect x="1771.0" y="340" width="2.2" height="2.2" fill="#fff"/>
<rect x="1771.0" y="344" width="2.2" height="2.2" fill="#fff"/>
<rect x="1771.0" y="348" width="2.2" height="2.2" fill="#fff"/>
<rect x="1771.0" y="352" width="2.2" height="2.2" fill="#fff"/>
<rect x="1771.0" y="356" width="2.2" height="2.2" fill="#fff"/>
<rect x="1775.0" y="340" width="2.2" height="2.2" fill="#fff"/>
<rect x="1775.0" y="344" width="2.2" height="2.2" fill="#fff"/>
<rect x="1775.0" y="348" width="2.2" height="2.2" fill="#fff"/>
<rect x="1775.0" y="352" width="2.2" height="2.2" fill="#fff"/>
<rect x="1775.0" y="356" width="2.2" height="2.2" fill="#fff"/>
<rect x="1779.0" y="340" width="2.2" height="2.2" fill="#fff"/>
<rect x="1779.0" y="344" width="2.2" height="2.2" fill="#fff"/>
<rect x="1779.0" y="348" width="2.2" height="2.2" fill="#fff"/>
<rect x="1779.0" y="352" width="2.2" height="2.2" fill="#fff"/>
<rect x="1779.0" y="356" width="2.2" height="2.2" fill="#fff"/>
<rect x="1783.0" y="340" width="2.2" height="2.2" fill="#fff"/>
<rect x="1783.0" y="344" width="2.2" height="2.2" fill="#fff"/>
<rect x="1783.0" y="348" width="2.2" height="2.2" fill="#fff"/>
<rect x="1783.0" y="352" width="2.2" height="2.2" fill="#fff"/>
<rect x="1783.0" y="356" width="2.2" height="2.2" fill="#fff"/>
<rect x="2129" y="334" width="31" height="32" fill="#2e2e2e"/>
<rect x="2137.5" y="340" width="2.2" height="2.2" fill="#fff"/>
<rect x="2137.5" y="344" width="2.2" height="2.2" fill="#fff"/>
<rect x="2137.5" y="348" width="2.2" height="2.2" fill="#fff"/>
<rect x="2137.5" y="352" width="2.2" height="2.2" fill="#fff"/>
<rect x="2137.5" y="356" width="2.2" height="2.2" fill="#fff"/>
<rect x="2141.5" y="340" width="2.2" height="2.2" fill="#fff"/>
<rect x="2141.5" y="344" width="2.2" height="2.2" fill="#fff"/>
<rect x="2141.5" y="348" width="2.2" height="2.2" fill="#fff"/>
<rect x="2141.5" y="352" width="2.2" height="2.2" fill="#fff"/>
<rect x="2141.5" y="356" width="2.2" height="2.2" fill="#fff"/>
<rect x="2145.5" y="340" width="2.2" height="2.2" fill="#fff"/>
<rect x="2145.5" y="344" width="2.2" height="2.2" fill="#fff"/>
<rect x="2145.5" y="348" width="2.2" height="2.2" fill="#fff"/>
<rect x="2145.5" y="352" width="2.2" height="2.2" fill="#fff"/>
<rect x="2145.5" y="356" width="2.2" height="2.2" fill="#fff"/>
<rect x="2149.5" y="340" width="2.2" height="2.2" fill="#fff"/>
<rect x="2149.5" y="344" width="2.2" height="2.2" fill="#fff"/>
<rect x="2149.5" y="348" width="2.2" height="2.2" fill="#fff"/>
<rect x="2149.5" y="352" width="2.2" height="2.2" fill="#fff"/>
<rect x="2149.5" y="356" width="2.2" height="2.2" fill="#fff"/>
<rect x="527.6" y="356" width="2" height="8" fill="#8c8c8c"/>
<rect x="554.6" y="356" width="2" height="8" fill="#8c8c8c"/>
<rect x="581.6" y="356" width="2" height="8" fill="#8c8c8c"/>
<rect x="608.6" y="356" width="2" height="8" fill="#8c8c8c"/>
<rect x="635.6" y="356" width="2" height="8" fill="#8c8c8c"/>
<rect x="662.6" y="346" width="2" height="18" fill="#8c8c8c"/>
<rect x="689.6" y="356" width="2" height="8" fill="#8c8c8c"/>
<rect x="716.6" y="356" width="2" height="8" fill="#8c8c8c"/>
<rect x="770.6" y="356" width="2" height="8" fill="#a3a3a3"/>
<rect x="797.6" y="356" width="2" height="8" fill="#a3a3a3"/>
<rect x="824.6" y="356" width="2" height="8" fill="#a3a3a3"/>
<rect x="851.6" y="356" width="2" height="8" fill="#a3a3a3"/>
<rect x="878.6" y="346" width="2" height="18" fill="#a3a3a3"/>
<rect x="905.6" y="356" width="2" height="8" fill="#a3a3a3"/>
<rect x="932.6" y="356" width="2" height="8" fill="#a3a3a3"/>
<rect x="959.6" y="356" width="2" height="8" fill="#a3a3a3"/>
<rect x="986.6" y="356" width="2" height="8" fill="#a3a3a3"/>
<rect x="1013.6" y="356" width="2" height="8" fill="#a3a3a3"/>
<rect x="1040.6" y="356" width="2" height="8" fill="#a3a3a3"/>
<rect x="1067.6" y="356" width="2" height="8" fill="#a3a3a3"/>
<rect x="1094.6" y="346" width="2" height="18" fill="#a3a3a3"/>
<rect x="1121.6" y="356" width="2" height="8" fill="#a3a3a3"/>
<rect x="1148.6" y="356" width="2" height="8" fill="#a3a3a3"/>
<rect x="1175.6" y="356" width="2" height="8" fill="#a3a3a3"/>
<rect x="1202.6" y="356" width="2" height="8" fill="#a3a3a3"/>
<rect x="1256.6" y="356" width="2" height="8" fill="#a3a3a3"/>
<rect x="1283.6" y="356" width="2" height="8" fill="#a3a3a3"/>
<rect x="1310.6" y="346" width="2" height="18" fill="#a3a3a3"/>
<rect x="1337.6" y="356" width="2" height="8" fill="#a3a3a3"/>
<rect x="1364.6" y="356" width="2" height="8" fill="#a3a3a3"/>
<rect x="1391.6" y="356" width="2" height="8" fill="#a3a3a3"/>
<rect x="1418.6" y="356" width="2" height="8" fill="#a3a3a3"/>
<rect x="1445.6" y="356" width="2" height="8" fill="#a3a3a3"/>
<rect x="1472.6" y="356" width="2" height="8" fill="#a3a3a3"/>
<rect x="1499.6" y="356" width="2" height="8" fill="#a3a3a3"/>
<rect x="1526.6" y="346" width="2" height="18" fill="#a3a3a3"/>
<rect x="1553.6" y="356" width="2" height="8" fill="#a3a3a3"/>
<rect x="1580.6" y="356" width="2" height="8" fill="#a3a3a3"/>
<rect x="1607.6" y="356" width="2" height="8" fill="#a3a3a3"/>
<rect x="1634.6" y="356" width="2" height="8" fill="#a3a3a3"/>
<rect x="1661.6" y="356" width="2" height="8" fill="#a3a3a3"/>
<rect x="1688.6" y="356" width="2" height="8" fill="#a3a3a3"/>
<rect x="1715.6" y="356" width="2" height="8" fill="#a3a3a3"/>
<rect x="1742.6" y="346" width="2" height="18" fill="#a3a3a3"/>
<rect x="1796.6" y="356" width="2" height="8" fill="#a3a3a3"/>
<rect x="1823.6" y="356" width="2" height="8" fill="#a3a3a3"/>
<rect x="1850.6" y="356" width="2" height="8" fill="#a3a3a3"/>
<rect x="1877.6" y="356" width="2" height="8" fill="#a3a3a3"/>
<rect x="1904.6" y="356" width="2" height="8" fill="#a3a3a3"/>
<rect x="1931.6" y="356" width="2" height="8" fill="#a3a3a3"/>
<rect x="1958.6" y="346" width="2" height="18" fill="#a3a3a3"/>
<rect x="1985.6" y="356" width="2" height="8" fill="#a3a3a3"/>
<rect x="2012.6" y="356" width="2" height="8" fill="#a3a3a3"/>
<rect x="2039.6" y="356" width="2" height="8" fill="#a3a3a3"/>
<rect x="2066.6" y="356" width="2" height="8" fill="#a3a3a3"/>
<rect x="2093.6" y="356" width="2" height="8" fill="#a3a3a3"/>
<rect x="2120.6" y="356" width="2" height="8" fill="#a3a3a3"/>
<rect x="2174.6" y="346" width="2" height="18" fill="#8c8c8c"/>
<rect x="2201.6" y="356" width="2" height="8" fill="#8c8c8c"/>
<rect x="2228.6" y="356" width="2" height="8" fill="#8c8c8c"/>
<rect x="2255.6" y="356" width="2" height="8" fill="#8c8c8c"/>
<rect x="2282.6" y="356" width="2" height="8" fill="#8c8c8c"/>
<rect x="2309.6" y="356" width="2" height="8" fill="#8c8c8c"/>
<rect x="2336.6" y="356" width="2" height="8" fill="#8c8c8c"/>
<text x="551.1" y="350.0" font-size="18.5" fill="#e4e4e4" font-weight="normal" text-anchor="start" textLength="9.0" lengthAdjust="spacingAndGlyphs">1</text>
<text x="983.1" y="350.0" font-size="18.5" fill="#e4e4e4" font-weight="normal" text-anchor="start" textLength="9.0" lengthAdjust="spacingAndGlyphs">1</text>
<text x="1199.1" y="350.0" font-size="18.5" fill="#e4e4e4" font-weight="normal" text-anchor="start" textLength="9.0" lengthAdjust="spacingAndGlyphs">2</text>
<text x="1415.1" y="350.0" font-size="18.5" fill="#e4e4e4" font-weight="normal" text-anchor="start" textLength="9.0" lengthAdjust="spacingAndGlyphs">3</text>
<text x="1631.1" y="350.0" font-size="18.5" fill="#e4e4e4" font-weight="normal" text-anchor="start" textLength="9.0" lengthAdjust="spacingAndGlyphs">4</text>
<text x="1847.1" y="350.0" font-size="18.5" fill="#e4e4e4" font-weight="normal" text-anchor="start" textLength="9.0" lengthAdjust="spacingAndGlyphs">5</text>
<text x="2063.1" y="350.0" font-size="18.5" fill="#e4e4e4" font-weight="normal" text-anchor="start" textLength="9.0" lengthAdjust="spacingAndGlyphs">6</text>
<text x="2279.1" y="350.0" font-size="18.5" fill="#e4e4e4" font-weight="normal" text-anchor="start" textLength="9.0" lengthAdjust="spacingAndGlyphs">7</text>
<path d="M1234,334.5 L1252,334.5 L1243,344.5 Z" fill="#dcdcdc" stroke="#dcdcdc" stroke-width="1.5" stroke-linejoin="round"/>
<path d="M1243,350 L1252,359 L1252,362 L1234,362 L1234,359 Z" fill="#dcdcdc" stroke="#dcdcdc" stroke-width="1.5" stroke-linejoin="round"/>
<rect x="1234" y="364" width="18" height="10" rx="2.5" fill="#dcdcdc"/>
<path d="M1764.5,351.5 L1774,360 L1774,363 L1755,363 L1755,360 Z" fill="#dcdcdc" stroke="#dcdcdc" stroke-width="1.5" stroke-linejoin="round"/>
<rect x="1349" y="366" width="2" height="5" fill="#8c8c8c"/>
<rect x="1457.5" y="366" width="2" height="5" fill="#8c8c8c"/>
<rect x="1565.5" y="366" width="2" height="5" fill="#8c8c8c"/>
<rect x="1674" y="366" width="2" height="5" fill="#8c8c8c"/>
<rect x="734" y="377.5" width="22" height="11" rx="1" fill="#f4f4f4"/>
<path d="M745,379 L745,386 M742,383.5 L745,386.5 L748,383.5 M737,379.5 L737,381 M753,379.5 L753,381" stroke="#222" stroke-width="1.4" fill="none"/>
<rect x="530" y="378" width="2" height="1346" fill="#d6d6d6"/>
<rect x="2364" y="378" width="2" height="1346" fill="#d6d6d6"/>
<rect x="760" y="391" width="1389" height="414" fill="#4f4f4f"/>
<rect x="758" y="390" width="1392" height="2" fill="#f2f2f2"/>
<rect x="758" y="804" width="1392" height="2" fill="#f2f2f2"/>
<rect x="1785" y="684" width="364" height="2" fill="#f2f2f2"/>
<rect x="1785" y="1164" width="364" height="2" fill="#f2f2f2"/>
<rect x="758" y="1300" width="1392" height="2" fill="#f2f2f2"/>
<rect x="758" y="390" width="2" height="1334" fill="#f2f2f2"/>
<rect x="1230" y="390" width="2" height="1334" fill="#f2f2f2"/>
<rect x="1784" y="390" width="2" height="1334" fill="#f2f2f2"/>
<rect x="2148" y="390" width="2" height="1334" fill="#f2f2f2"/>
<text x="885.4" y="420.6" font-size="27.0" fill="#f4f4f4" font-weight="normal" text-anchor="start" textLength="220.2" lengthAdjust="spacingAndGlyphs" stroke="#f4f4f4" stroke-width="0.7">Business-question</text>
<text x="1313.3" y="420.0" font-size="27.0" fill="#f4f4f4" font-weight="bold" text-anchor="start" textLength="389.4" lengthAdjust="spacingAndGlyphs" stroke="#f4f4f4" stroke-width="0.7">Possible hypothesis that can be</text>
<text x="1376.6" y="457.0" font-size="27.0" fill="#f4f4f4" font-weight="bold" text-anchor="start" textLength="262.8" lengthAdjust="spacingAndGlyphs" stroke="#f4f4f4" stroke-width="0.7">researched with data</text>
<text x="1285.9" y="494.0" font-size="27.0" fill="#f4f4f4" font-weight="normal" text-anchor="start" textLength="444.1" lengthAdjust="spacingAndGlyphs" stroke="#f4f4f4" stroke-width="0.7">(Statement should be answerable by</text>
<text x="1440.3" y="530.0" font-size="27.0" fill="#f4f4f4" font-weight="normal" text-anchor="start" textLength="135.5" lengthAdjust="spacingAndGlyphs" stroke="#f4f4f4" stroke-width="0.7">True/False)</text>
<text x="1817.4" y="420.0" font-size="27.0" fill="#f4f4f4" font-weight="normal" text-anchor="start" textLength="299.1" lengthAdjust="spacingAndGlyphs" stroke="#f4f4f4" stroke-width="0.7">Data needed to research</text>
<text x="1869.9" y="456.6" font-size="27.0" fill="#f4f4f4" font-weight="normal" text-anchor="start" textLength="193.9" lengthAdjust="spacingAndGlyphs" stroke="#f4f4f4" stroke-width="0.7">the hypothesis*</text>
<text x="1833.2" y="493.2" font-size="27.0" fill="#f4f4f4" font-weight="normal" text-anchor="start" textLength="267.4" lengthAdjust="spacingAndGlyphs" stroke="#f4f4f4" stroke-width="0.7">Give 2-4 possible data</text>
<text x="1867.5" y="529.8" font-size="27.0" fill="#f4f4f4" font-weight="normal" text-anchor="start" textLength="198.8" lengthAdjust="spacingAndGlyphs" stroke="#f4f4f4" stroke-width="0.7">sources for each</text>
<text x="1811.0" y="566.4" font-size="27.0" fill="#f4f4f4" font-weight="normal" text-anchor="start" textLength="311.9" lengthAdjust="spacingAndGlyphs" stroke="#f4f4f4" stroke-width="0.7">hypothesis. Be thoughtful</text>
<text x="1851.1" y="603.0" font-size="27.0" fill="#f4f4f4" font-weight="normal" text-anchor="start" textLength="231.6" lengthAdjust="spacingAndGlyphs" stroke="#f4f4f4" stroke-width="0.7">and as thorough as</text>
<text x="1849.9" y="639.6" font-size="27.0" fill="#f4f4f4" font-weight="normal" text-anchor="start" textLength="234.1" lengthAdjust="spacingAndGlyphs" stroke="#f4f4f4" stroke-width="0.7">possible. Do not be</text>
<text x="1904.5" y="676.2" font-size="27.0" fill="#f4f4f4" font-weight="normal" text-anchor="start" textLength="124.7" lengthAdjust="spacingAndGlyphs" stroke="#f4f4f4" stroke-width="0.7">repetitive.</text>
<text x="1852.2" y="712.5" font-size="27.0" fill="#f4f4f4" font-weight="normal" text-anchor="start" textLength="229.4" lengthAdjust="spacingAndGlyphs" stroke="#f4f4f4" stroke-width="0.7">Suggested Analysis</text>
<text x="1884.9" y="750.3" font-size="27.0" fill="#f4f4f4" font-weight="normal" text-anchor="start" textLength="164.1" lengthAdjust="spacingAndGlyphs" stroke="#f4f4f4" stroke-width="0.7">Methodology</text>
<text x="831.5" y="840.0" font-size="32.4" fill="#f4f4f4" font-weight="normal" text-anchor="start" textLength="139.2" lengthAdjust="spacingAndGlyphs" stroke="#f4f4f4" stroke-width="0.7">EXAMPLE</text>
<text x="777.5" y="884.0" font-size="32.4" fill="#f4f4f4" font-weight="normal" text-anchor="start" textLength="40.1" lengthAdjust="spacingAndGlyphs" stroke="#f4f4f4" stroke-width="0.7">(1)</text>
<text x="831.5" y="884.0" font-size="32.4" fill="#f4f4f4" font-weight="normal" text-anchor="start" textLength="328.4" lengthAdjust="spacingAndGlyphs" stroke="#f4f4f4" stroke-width="0.7">We need to define our</text>
<text x="831.5" y="927.6" font-size="32.4" fill="#f4f4f4" font-weight="normal" text-anchor="start" textLength="301.5" lengthAdjust="spacingAndGlyphs" stroke="#f4f4f4" stroke-width="0.7">target demographics</text>
<text x="831.5" y="971.6" font-size="32.4" fill="#f4f4f4" font-weight="normal" text-anchor="start" textLength="95.0" lengthAdjust="spacingAndGlyphs" stroke="#f4f4f4" stroke-width="0.7">better.</text>
<circle cx="1256.4" cy="832.0" r="6.6" fill="#f4f4f4"/>
<text x="1302.7" y="841.5" font-size="32.4" fill="#f4f4f4" font-weight="normal" text-anchor="start" textLength="368.7" lengthAdjust="spacingAndGlyphs" stroke="#f4f4f4" stroke-width="0.7">Our target customers live</text>
<text x="1302.7" y="886.0" font-size="32.4" fill="#f4f4f4" font-weight="normal" text-anchor="start" textLength="305.5" lengthAdjust="spacingAndGlyphs" stroke="#f4f4f4" stroke-width="0.7">within 10 mile radius</text>
<circle cx="1256.4" cy="921.9" r="6.6" fill="#f4f4f4"/>
<text x="1302.7" y="931.4" font-size="32.4" fill="#f4f4f4" font-weight="normal" text-anchor="start" textLength="410.2" lengthAdjust="spacingAndGlyphs" stroke="#f4f4f4" stroke-width="0.7">Our target customers are 40</text>
<text x="1302.7" y="975.4" font-size="32.4" fill="#f4f4f4" font-weight="normal" text-anchor="start" textLength="235.6" lengthAdjust="spacingAndGlyphs" stroke="#f4f4f4" stroke-width="0.7">years and under</text>
<circle cx="1256.4" cy="1011.8" r="6.6" fill="#f4f4f4"/>
<text x="1302.7" y="1021.3" font-size="32.4" fill="#f4f4f4" font-weight="normal" text-anchor="start" textLength="365.5" lengthAdjust="spacingAndGlyphs" stroke="#f4f4f4" stroke-width="0.7">Our target customers are</text>
<text x="1302.7" y="1065.6" font-size="32.4" fill="#f4f4f4" font-weight="normal" text-anchor="start" textLength="231.1" lengthAdjust="spacingAndGlyphs" stroke="#f4f4f4" stroke-width="0.7">majority female</text>
<rect x="1403" y="891" width="108" height="2" fill="#5b8cf0"/>
<rect x="1403" y="894.5" width="108" height="2" fill="#5b8cf0"/>
<circle cx="1810.2" cy="831.9" r="6.6" fill="#f4f4f4"/>
<text x="1857.2" y="841.4" font-size="32.4" fill="#f4f4f4" font-weight="normal" text-anchor="start" textLength="275.8" lengthAdjust="spacingAndGlyphs" stroke="#f4f4f4" stroke-width="0.7">Internal sales data,</text>
<circle cx="1810.2" cy="877.9" r="6.6" fill="#f4f4f4"/>
<text x="1857.2" y="887.4" font-size="32.4" fill="#f4f4f4" font-weight="normal" text-anchor="start" textLength="258.0" lengthAdjust="spacingAndGlyphs" stroke="#f4f4f4" stroke-width="0.7">Town census data</text>
<circle cx="1810.2" cy="924.4" r="6.6" fill="#f4f4f4"/>
<text x="1857.2" y="933.9" font-size="32.4" fill="#f4f4f4" font-weight="normal" text-anchor="start" textLength="136.3" lengthAdjust="spacingAndGlyphs" stroke="#f4f4f4" stroke-width="0.7">Historical</text>
<text x="1857.2" y="977.6" font-size="32.4" fill="#f4f4f4" font-weight="normal" text-anchor="start" textLength="266.2" lengthAdjust="spacingAndGlyphs" stroke="#f4f4f4" stroke-width="0.7">Transactional data</text>
<circle cx="1810.2" cy="1013.9" r="6.6" fill="#f4f4f4"/>
<text x="1857.2" y="1023.4" font-size="32.4" fill="#f4f4f4" font-weight="normal" text-anchor="start" textLength="149.4" lengthAdjust="spacingAndGlyphs" stroke="#f4f4f4" stroke-width="0.7">Marketing</text>
<text x="1857.2" y="1067.3" font-size="32.4" fill="#f4f4f4" font-weight="normal" text-anchor="start" textLength="238.9" lengthAdjust="spacingAndGlyphs" stroke="#f4f4f4" stroke-width="0.7">strategy – target</text>
<text x="1857.2" y="1111.5" font-size="32.4" fill="#f4f4f4" font-weight="normal" text-anchor="start" textLength="151.2" lengthAdjust="spacingAndGlyphs" stroke="#f4f4f4" stroke-width="0.7">customers</text>
<text x="1804.0" y="1199.9" font-size="32.4" fill="#f4f4f4" font-weight="normal" text-anchor="start" textLength="206.5" lengthAdjust="spacingAndGlyphs" stroke="#f4f4f4" stroke-width="0.7">Methodology:</text>
<text x="1857.0" y="1243.7" font-size="32.4" fill="#f4f4f4" font-weight="normal" text-anchor="start" textLength="11.0" lengthAdjust="spacingAndGlyphs" stroke="#f4f4f4" stroke-width="0.7">-</text>
<text x="1911.0" y="1243.7" font-size="32.4" fill="#f4f4f4" font-weight="normal" text-anchor="start" textLength="203.2" lengthAdjust="spacingAndGlyphs" stroke="#f4f4f4" stroke-width="0.7">Segmentation</text>
<text x="831.5" y="1336.3" font-size="32.4" fill="#f4f4f4" font-weight="normal" text-anchor="start" textLength="139.2" lengthAdjust="spacingAndGlyphs" stroke="#f4f4f4" stroke-width="0.7">EXAMPLE</text>
<text x="777.5" y="1379.5" font-size="32.4" fill="#f4f4f4" font-weight="normal" text-anchor="start" textLength="40.1" lengthAdjust="spacingAndGlyphs" stroke="#f4f4f4" stroke-width="0.7">(2)</text>
<text x="831.5" y="1379.5" font-size="32.4" fill="#f4f4f4" font-weight="normal" text-anchor="start" textLength="346.9" lengthAdjust="spacingAndGlyphs" stroke="#f4f4f4" stroke-width="0.7">We need to get a better</text>
<text x="831.5" y="1423.5" font-size="32.4" fill="#f4f4f4" font-weight="normal" text-anchor="start" textLength="331.0" lengthAdjust="spacingAndGlyphs" stroke="#f4f4f4" stroke-width="0.7">understanding of what</text>
<text x="831.5" y="1467.5" font-size="32.4" fill="#f4f4f4" font-weight="normal" text-anchor="start" textLength="363.5" lengthAdjust="spacingAndGlyphs" stroke="#f4f4f4" stroke-width="0.7">the younger shoe-buyers</text>
<text x="831.5" y="1511.5" font-size="32.4" fill="#f4f4f4" font-weight="normal" text-anchor="start" textLength="297.1" lengthAdjust="spacingAndGlyphs" stroke="#f4f4f4" stroke-width="0.7">care about e.g Style,</text>
<text x="831.5" y="1555.5" font-size="32.4" fill="#f4f4f4" font-weight="normal" text-anchor="start" textLength="272.5" lengthAdjust="spacingAndGlyphs" stroke="#f4f4f4" stroke-width="0.7">color, price, brand,</text>
<text x="831.5" y="1599.5" font-size="32.4" fill="#f4f4f4" font-weight="normal" text-anchor="start" textLength="106.7" lengthAdjust="spacingAndGlyphs" stroke="#f4f4f4" stroke-width="0.7">quality.</text>
<path d="M996,1519 q1.6,-2.4 3.2,0 q1.6,2.4 3.2,0 q1.6,-2.4 3.2,0 q1.6,2.4 3.2,0 q1.6,-2.4 3.2,0 q1.6,2.4 3.2,0 q1.6,-2.4 3.2,0 q1.6,2.4 3.2,0 q1.6,-2.4 3.2,0 q1.6,2.4 3.2,0 q1.6,-2.4 3.2,0 q1.6,2.4 3.2,0 q1.6,-2.4 3.2,0 q1.6,2.4 3.2,0" fill="none" stroke="#e2564c" stroke-width="1.8"/>
<text x="1249.2" y="1335.5" font-size="32.4" fill="#f4f4f4" font-weight="normal" text-anchor="start" textLength="512.2" lengthAdjust="spacingAndGlyphs" stroke="#f4f4f4" stroke-width="0.7">1) Young buyers (20 and under) are</text>
<text x="1249.2" y="1379.5" font-size="32.4" fill="#f4f4f4" font-weight="normal" text-anchor="start" textLength="375.9" lengthAdjust="spacingAndGlyphs" stroke="#f4f4f4" stroke-width="0.7">brand and style conscious</text>
<text x="1249.2" y="1423.5" font-size="32.4" fill="#f4f4f4" font-weight="normal" text-anchor="start" textLength="456.8" lengthAdjust="spacingAndGlyphs" stroke="#f4f4f4" stroke-width="0.7">2) Young buyers (20 and under)</text>
<text x="1249.2" y="1467.5" font-size="32.4" fill="#f4f4f4" font-weight="normal" text-anchor="start" textLength="432.7" lengthAdjust="spacingAndGlyphs" stroke="#f4f4f4" stroke-width="0.7">would like more color choices</text>
<circle cx="1810.2" cy="1328.1" r="6.6" fill="#f4f4f4"/>
<text x="1857.2" y="1337.6" font-size="32.4" fill="#f4f4f4" font-weight="normal" text-anchor="start" textLength="194.0" lengthAdjust="spacingAndGlyphs" stroke="#f4f4f4" stroke-width="0.7">Internal sales</text>
<text x="1857.2" y="1381.2" font-size="32.4" fill="#f4f4f4" font-weight="normal" text-anchor="start" textLength="237.4" lengthAdjust="spacingAndGlyphs" stroke="#f4f4f4" stroke-width="0.7">transaction data</text>
<circle cx="1810.2" cy="1418.0" r="6.6" fill="#f4f4f4"/>
<text x="1857.2" y="1427.5" font-size="32.4" fill="#f4f4f4" font-weight="normal" text-anchor="start" textLength="241.6" lengthAdjust="spacingAndGlyphs" stroke="#f4f4f4" stroke-width="0.7">customer survey</text>
<text x="1857.2" y="1471.3" font-size="32.4" fill="#f4f4f4" font-weight="normal" text-anchor="start" textLength="134.5" lengthAdjust="spacingAndGlyphs" stroke="#f4f4f4" stroke-width="0.7">to collect</text>
<text x="1857.2" y="1515.3" font-size="32.4" fill="#f4f4f4" font-weight="normal" text-anchor="start" textLength="240.6" lengthAdjust="spacingAndGlyphs" stroke="#f4f4f4" stroke-width="0.7">birthdays (to get</text>
<text x="1857.2" y="1559.3" font-size="32.4" fill="#f4f4f4" font-weight="normal" text-anchor="start" textLength="76.8" lengthAdjust="spacingAndGlyphs" stroke="#f4f4f4" stroke-width="0.7">ages)</text>
<circle cx="1810.2" cy="1595.4" r="6.6" fill="#f4f4f4"/>
<text x="1857.2" y="1604.9" font-size="32.4" fill="#f4f4f4" font-weight="normal" text-anchor="start" textLength="251.1" lengthAdjust="spacingAndGlyphs" stroke="#f4f4f4" stroke-width="0.7">Research data on</text>
<text x="1857.2" y="1648.9" font-size="32.4" fill="#f4f4f4" font-weight="normal" text-anchor="start" textLength="234.6" lengthAdjust="spacingAndGlyphs" stroke="#f4f4f4" stroke-width="0.7">industry fashion</text>
<text x="1857.2" y="1692.9" font-size="32.4" fill="#f4f4f4" font-weight="normal" text-anchor="start" textLength="240.8" lengthAdjust="spacingAndGlyphs" stroke="#f4f4f4" stroke-width="0.7">colors and styles</text>
<circle cx="1810.2" cy="1729.4" r="6.6" fill="#f4f4f4"/>
<text x="1857.2" y="1738.9" font-size="32.4" fill="#f4f4f4" font-weight="normal" text-anchor="start" textLength="251.1" lengthAdjust="spacingAndGlyphs" stroke="#f4f4f4" stroke-width="0.7">Research data on</text>
</g>
<rect x="44" y="1724" width="2806" height="30" fill="#343434"/>
<rect x="44" y="1724" width="2806" height="1" fill="#3f3f3f"/>
<rect x="2850" y="378" width="30" height="1376" fill="#343434"/>
<rect x="2850" y="378" width="1" height="1346" fill="#3f3f3f"/>
<rect x="2858" y="932" width="16" height="244" rx="8" fill="#9e9e9e"/>
<rect x="0" y="1754" width="2880" height="2" fill="#000"/>
<rect x="0" y="1756" width="2880" height="44" fill="url(#sb)"/>
<text x="48.5" y="1786.0" font-size="25" fill="#e2e2e2" font-weight="normal" text-anchor="start" textLength="128.0" lengthAdjust="spacingAndGlyphs">Page 2 of 3</text>
<text x="219.5" y="1786.0" font-size="25" fill="#e2e2e2" font-weight="normal" text-anchor="start" textLength="115.0" lengthAdjust="spacingAndGlyphs">513 words</text>
<path d="M375,1766 L375,1786 L390,1786 L390,1790 M390,1786 L405,1786 L405,1781 M375,1766 L390,1766 L390,1786 M390,1766 L395,1766" stroke="#dcdcdc" stroke-width="1.8" fill="none" stroke-linecap="round" stroke-linejoin="round" stroke-linecap="butt"/>
<path d="M396,1768 L404,1776 M404,1768 L396,1776" stroke="#dcdcdc" stroke-width="1.8" fill="none" stroke-linecap="round" stroke-linejoin="round"/>
<text x="442.5" y="1786.0" font-size="25" fill="#e2e2e2" font-weight="normal" text-anchor="start" textLength="258.0" lengthAdjust="spacingAndGlyphs">English (United States)</text>
<circle cx="748" cy="1766.5" r="4.5" fill="#e6e6e6"/>
<path d="M748,1773 L748,1787 L767,1787 L767,1766 L773,1766" stroke="#e6e6e6" stroke-width="2.6" fill="none" stroke-linecap="round" stroke-linejoin="round"/>
<rect x="744" y="1784" width="12" height="5" fill="#e6e6e6"/>
<rect x="2038.5" y="1766.5" width="29" height="21" fill="none" stroke="#dcdcdc" stroke-width="2"/>
<path d="M2043,1771 L2043,1774 M2043,1771 L2046,1771 M2063,1771 L2063,1774 M2063,1771 L2060,1771 M2043,1783 L2043,1780 M2043,1783 L2046,1783 M2063,1783 L2063,1780 M2063,1783 L2060,1783" stroke="#dcdcdc" stroke-width="1.6" fill="none" stroke-linecap="round" stroke-linejoin="round"/>
<text x="2081.0" y="1786.0" font-size="25" fill="#e2e2e2" font-weight="normal" text-anchor="start" textLength="67.0" lengthAdjust="spacingAndGlyphs">Focus</text>
<rect x="2170" y="1756" width="74" height="44" fill="#585858"/>
<rect x="2194" y="1765" width="26" height="24.5" fill="none" stroke="#e8e8e8" stroke-width="2"/>
<rect x="2198" y="1770.0" width="18" height="2" fill="#e8e8e8"/>
<rect x="2198" y="1774.5" width="18" height="2" fill="#e8e8e8"/>
<rect x="2198" y="1779.0" width="18" height="2" fill="#e8e8e8"/>
<rect x="2198" y="1783.5" width="18" height="2" fill="#e8e8e8"/>
<rect x="2264" y="1765" width="22" height="20" fill="none" stroke="#dcdcdc" stroke-width="1.8"/>
<rect x="2268" y="1770.0" width="14" height="1.6" fill="#dcdcdc"/>
<rect x="2268" y="1774.2" width="14" height="1.6" fill="#dcdcdc"/>
<rect x="2268" y="1778.4" width="14" height="1.6" fill="#dcdcdc"/>
<circle cx="2287" cy="1784" r="8" fill="#dcdcdc" stroke="#474747" stroke-width="1.5"/>
<path d="M2282,1782 Q2286,1779 2289,1783 Q2291,1787 2286,1790" fill="none" stroke="#474747" stroke-width="1.5"/>
<rect x="2336" y="1767" width="7" height="2" fill="#dcdcdc"/>
<rect x="2346" y="1767" width="20" height="2" fill="#dcdcdc"/>
<rect x="2343" y="1774" width="4" height="2" fill="#dcdcdc"/>
<rect x="2350" y="1774" width="16" height="2" fill="#dcdcdc"/>
<rect x="2343" y="1781" width="4" height="2" fill="#dcdcdc"/>
<rect x="2350" y="1781" width="16" height="2" fill="#dcdcdc"/>
<rect x="2336" y="1788" width="7" height="2" fill="#dcdcdc"/>
<rect x="2346" y="1788" width="20" height="2" fill="#dcdcdc"/>
<rect x="2408" y="1768.0" width="28" height="2.2" fill="#dcdcdc"/>
<rect x="2408" y="1774.5" width="28" height="2.2" fill="#dcdcdc"/>
<rect x="2408" y="1781.0" width="28" height="2.2" fill="#dcdcdc"/>
<rect x="2408" y="1787.5" width="20" height="2.2" fill="#dcdcdc"/>
<rect x="2474.5" y="1776" width="15.5" height="3" fill="#e6e6e6"/>
<rect x="2504" y="1774" width="199.5" height="7.5" rx="3.75" fill="#6d6d6d"/>
<circle cx="2615" cy="1777.5" r="16" fill="#a2a2a2"/>
<rect x="2718" y="1776" width="16" height="3" fill="#e6e6e6"/>
<rect x="2724.5" y="1769.5" width="3" height="16" fill="#e6e6e6"/>
<text x="2768.5" y="1786.0" font-size="25" fill="#e2e2e2" font-weight="normal" text-anchor="start" textLength="61.5" lengthAdjust="spacingAndGlyphs">150%</text>
</svg>
</body></html>
